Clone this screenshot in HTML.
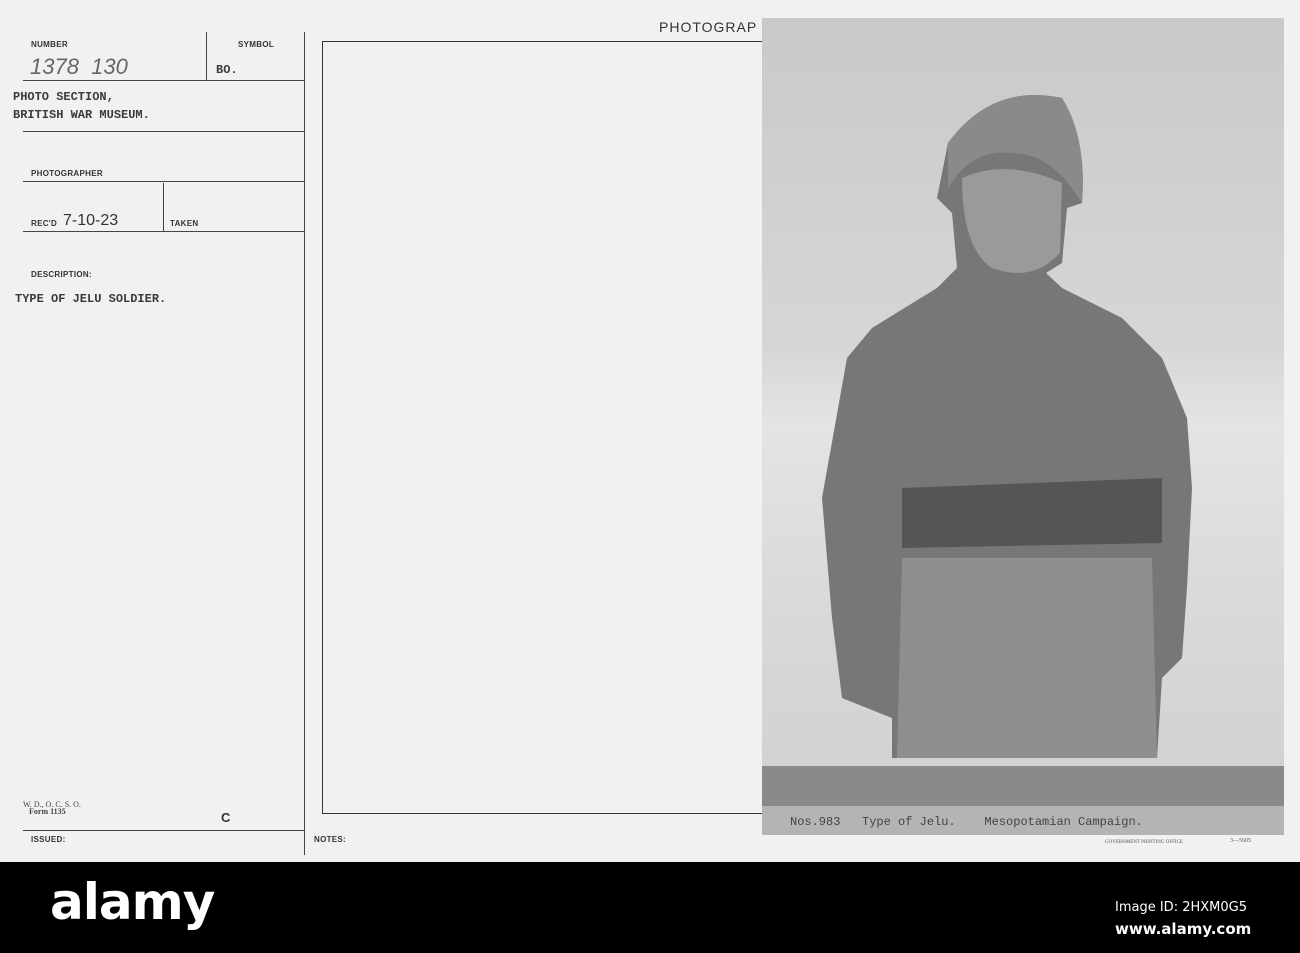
<!DOCTYPE html>
<html><head><style>
body{margin:0;width:1300px;height:953px;overflow:hidden;background:#000;position:relative;font-family:"Liberation Mono",monospace}
.card{position:absolute;left:0;top:0;width:1300px;height:862px;background:#f1f1f0}
.l{position:absolute;background:#444}
.t{position:absolute;color:#333;white-space:nowrap}
.sm{font-family:"Liberation Sans",sans-serif;font-size:8px;font-weight:bold;letter-spacing:.3px;color:#333}
.ty{font-family:"Liberation Mono",monospace;font-size:12px;font-weight:bold;color:#3a3a3a}
.photo{position:absolute;left:762px;top:18px;width:522px;height:817px;background:linear-gradient(#c9c9c9,#d6d6d6 40%,#e4e4e4 50%,#dadada 70%,#cfcfcf)}
</style></head><body>
<div class="card">
<div class="l" style="left:304px;top:32px;width:1px;height:823px"></div>
<div class="l" style="left:206px;top:32px;width:1px;height:48px"></div>
<div class="l" style="left:163px;top:183px;width:1px;height:48px"></div>
<div class="l" style="left:23px;top:80px;width:281px;height:1px"></div>
<div class="l" style="left:23px;top:131px;width:281px;height:1px"></div>
<div class="l" style="left:23px;top:181px;width:281px;height:1px"></div>
<div class="l" style="left:23px;top:231px;width:281px;height:1px"></div>
<div class="l" style="left:23px;top:830px;width:281px;height:1px"></div>
<div style="position:absolute;left:322px;top:41px;width:460px;height:771px;border:1px solid #333"></div>
<div class="t sm" style="left:31px;top:40px">NUMBER</div>
<div class="t sm" style="left:238px;top:40px">SYMBOL</div>
<div class="t" style="left:30px;top:54px;font-family:'Liberation Sans',sans-serif;font-style:italic;font-size:22px;color:#666">1378&nbsp;&nbsp;130</div>
<div class="t ty" style="left:216px;top:63px">BO.</div>
<div class="t ty" style="left:13px;top:90px">PHOTO SECTION,</div>
<div class="t ty" style="left:13px;top:108px">BRITISH WAR MUSEUM.</div>
<div class="t sm" style="left:31px;top:169px">PHOTOGRAPHER</div>
<div class="t sm" style="left:31px;top:219px">REC'D</div>
<div class="t" style="left:63px;top:212px;font-family:'Liberation Sans',sans-serif;font-size:16px;color:#333">7-10-23</div>
<div class="t sm" style="left:170px;top:219px">TAKEN</div>
<div class="t sm" style="left:31px;top:270px">DESCRIPTION:</div>
<div class="t ty" style="left:15px;top:292px">TYPE OF JELU SOLDIER.</div>
<div class="t" style="left:23px;top:801px;font-family:'Liberation Serif',serif;font-size:8px;line-height:7px;color:#444">W. D., O. C. S. O.<br>&nbsp;&nbsp;&nbsp;<b>Form 1135</b></div>
<div class="t" style="left:221px;top:810px;font-family:'Liberation Sans',sans-serif;font-size:13px;font-weight:bold">C</div>
<div class="t sm" style="left:31px;top:835px">ISSUED:</div>
<div class="t sm" style="left:314px;top:835px">NOTES:</div>
<div class="t" style="left:659px;top:19px;font-family:'Liberation Sans',sans-serif;font-size:14px;letter-spacing:1px;color:#333">PHOTOGRAP</div>
<div class="photo">
<svg width="522" height="817" style="position:absolute;left:0;top:0">
<path d="M186 125 Q230 65 300 80 Q325 120 320 185 L305 190 L300 245 L284 255 L300 270 L360 300 L380 320 L400 340 L425 400 L430 470 L425 570 L420 640 L400 660 L395 740 L130 740 L130 700 L80 680 L70 600 L60 480 L85 340 L110 310 L175 270 L195 250 L190 195 L175 180 Z" fill="#777"/>
<path d="M186 125 Q230 65 300 80 Q325 120 320 185 Q290 135 250 135 Q210 130 186 170 Z" fill="#8a8a8a"/>
<path d="M200 160 Q245 140 300 165 L298 235 Q270 265 230 250 Q200 230 200 160 Z" fill="#9a9a9a"/>
<path d="M140 470 L400 460 L400 525 L140 530 Z" fill="#555"/>
<path d="M140 540 L390 540 L395 740 L135 740 Z" fill="#8e8e8e"/>
</svg>
<div style="position:absolute;left:0;top:748px;width:522px;height:40px;background:#8a8a8a"></div>
<div style="position:absolute;left:0;top:788px;width:522px;height:29px;background:#b4b4b4"></div>
<div class="t" style="left:28px;top:797px;font-size:12px;color:#444">Nos.983&nbsp;&nbsp;&nbsp;Type of Jelu.&nbsp;&nbsp;&nbsp;&nbsp;Mesopotamian Campaign.</div>
</div>
<div class="t" style="left:1105px;top:840px;font-family:'Liberation Serif',serif;font-size:5px;color:#555">GOVERNMENT PRINTING OFFICE</div>
<div class="t" style="left:1230px;top:838px;font-family:'Liberation Serif',serif;font-size:6px;color:#555">3—5605</div>
</div>
<div style="position:absolute;left:50px;top:873px;color:#fff;font-family:'DejaVu Sans',sans-serif;font-weight:bold;font-size:50px;letter-spacing:-1px">alamy</div>
<div class="t" style="left:1115px;top:900px;color:#fff;font-family:'DejaVu Sans',sans-serif;font-size:13px">Image ID: 2HXM0G5</div>
<div class="t" style="left:1115px;top:920px;color:#fff;font-family:'DejaVu Sans',sans-serif;font-weight:bold;font-size:15px">www.alamy.com</div>
</body></html>
